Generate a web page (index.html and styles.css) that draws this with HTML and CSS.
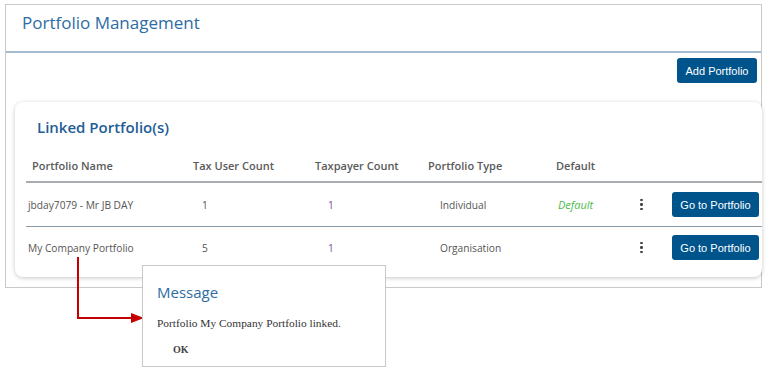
FILE: index.html
```html
<!DOCTYPE html>
<html lang="en">
<head>
    <meta charset="UTF-8">
    <meta name="viewport" content="width=device-width, initial-scale=1.0">
    <title>Portfolio Management</title>
    <link rel="stylesheet" href="styles.css">
</head>
<body>
    <div class="frame">
        <div class="pageHeader">
            <h1>Portfolio Management</h1>
        </div>

        <!-- toolbar -->
        <div class="toolbar">
            <button class="btn addBtn">Add Portfolio</button>
        </div>

        <!-- linked portfolios -->
        <div class="card">
            <h2>Linked Portfolio(s)</h2>
            <div class="grid headRow">
                <div class="cell first">Portfolio Name</div>
                <div class="cell">Tax User Count</div>
                <div class="cell">Taxpayer Count</div>
                <div class="cell">Portfolio Type</div>
                <div class="cell">Default</div>
                <div class="cell"></div>
                <div class="cell"></div>
            </div>
            <div class="grid row">
                <div class="cell first">jbday7079 - Mr JB DAY</div>
                <div class="cell users">1</div>
                <div class="cell payers">1</div>
                <div class="cell type">Individual</div>
                <div class="cell def">Default</div>
                <div class="cell"><span class="kebab"><i></i><i></i><i></i></span></div>
                <div class="cell"><button class="btn goBtn">Go to Portfolio</button></div>
            </div>
            <div class="grid row last">
                <div class="cell first">My Company Portfolio</div>
                <div class="cell users">5</div>
                <div class="cell payers">1</div>
                <div class="cell type">Organisation</div>
                <div class="cell def"></div>
                <div class="cell"><span class="kebab"><i></i><i></i><i></i></span></div>
                <div class="cell"><button class="btn goBtn">Go to Portfolio</button></div>
            </div>
        </div>
    </div>

    <!-- callout arrow -->
    <svg class="arrow" width="80" height="80" viewBox="0 0 80 80">
        <polyline points="2,0 2,61 56,61" fill="none" stroke="#c40000" stroke-width="2"/>
        <polygon points="55,56 68,61 55,66" fill="#c40000"/>
    </svg>

    <!-- message dialog -->
    <div class="dialog">
        <div class="dialogTitle">Message</div>
        <p class="dialogText">Portfolio My Company Portfolio linked.</p>
        <div class="dialogOk">OK</div>
    </div>
</body>
</html>
```

FILE: styles.css
```css
body {
    margin: 0;
    background-color: #fff;
    font-family: "Open Sans", Arial, sans-serif;
    color: #555;
}

.frame {
    margin: 4px 0 0 5px;
    width: 755px;
    border: 1px solid #c9c9c9;
    padding-bottom: 10px;
}

.pageHeader {
    height: 40px;
    padding-top: 6px;
    border-bottom: 2px solid #a6bdd1;
}

h1 {
    margin: 0 0 0 16px;
    font-size: 17px;
    line-height: 24px;
    font-weight: 400;
    color: #2d6ca4;
}

.toolbar {
    display: flex;
    justify-content: flex-end;
    padding: 5px 4px 0 0;
}

.btn {
    background-color: #00548c;
    color: #fff;
    border: none;
    border-radius: 3px;
    font-family: "Liberation Sans", Arial, sans-serif;
    font-size: 11px;
    height: 25px;
    padding: 0;
    cursor: pointer;
}

.addBtn {
    width: 80px;
}

.goBtn {
    width: 87px;
}

/* card */
.card {
    margin: 19px -1px 0 9px;
    padding: 13px 0 9px 11px;
    border-radius: 8px;
    box-shadow: 0 1px 4px rgba(0, 0, 0, 0.22);
    background-color: #fff;
}

h2 {
    margin: 0 0 11px 11px;
    font-size: 15px;
    line-height: 24px;
    font-weight: 600;
    color: #1f5e96;
}

.grid {
    display: grid;
    grid-template-columns: 167px 122px 113px 128px 74px 42px 90px;
    align-items: center;
    font-size: 10.2px;
}

.headRow {
    height: 31px;
    border-bottom: 2px solid #a9adb1;
    font-size: 11px;
    font-weight: 600;
    color: #5a5a5a;
}

.headRow .first {
    padding-left: 6px;
}

.row {
    height: 43px;
    border-bottom: 1px solid #8b9aa7;
}

.row.last {
    height: 41px;
    border-bottom: none;
}

.row .first {
    padding-left: 2px;
}

.users {
    padding-left: 9px;
}

.payers {
    padding-left: 13px;
    color: #7b4f9c;
}

.type {
    padding-left: 12px;
}

.def {
    padding-left: 2px;
    font-size: 11px;
    font-style: italic;
    color: #4cbb4c;
}

.kebab {
    display: flex;
    flex-direction: column;
    gap: 2px;
    margin-left: 10px;
}

.kebab i {
    width: 2.5px;
    height: 2.5px;
    border-radius: 50%;
    background-color: #444;
}

/* callout */
.arrow {
    position: absolute;
    left: 76px;
    top: 257px;
}

.dialog {
    position: absolute;
    left: 142px;
    top: 265px;
    width: 242px;
    height: 100px;
    border: 1px solid #c8c8c8;
    background-color: #fff;
}

.dialogTitle {
    margin: 16px 0 0 14px;
    font-size: 15px;
    color: #2d6ca4;
}

.dialogText {
    margin: 15px 0 0 14px;
    font-family: "Liberation Serif", "Times New Roman", serif;
    font-size: 11.4px;
    color: #333;
}

.dialogOk {
    margin: 15px 0 0 30px;
    font-family: "Liberation Serif", "Times New Roman", serif;
    font-size: 10px;
    font-weight: 600;
    color: #444;
}
```
